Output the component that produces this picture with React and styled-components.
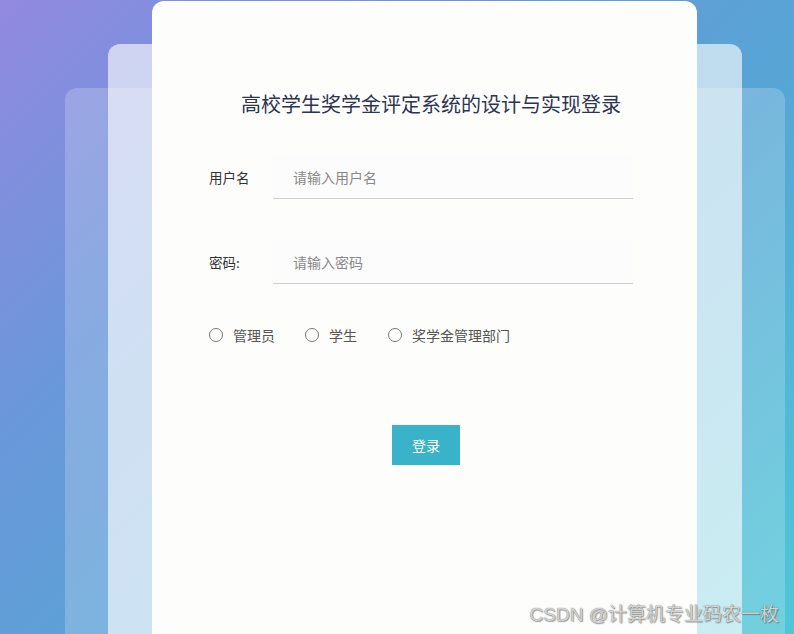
import React from "react";
import styled, { createGlobalStyle } from "styled-components";

const Global = createGlobalStyle`
  html, body { margin: 0; padding: 0; }
  body {
    font-family: "Noto Sans CJK SC", "Microsoft YaHei", "Noto Sans", sans-serif;
    overflow: hidden;
  }
`;

const Page = styled.div`
  position: relative;
  width: 794px;
  height: 634px;
  overflow: hidden;
  background: linear-gradient(135deg, #9389e0 0%, #6a97da 30%, #57a5d5 60%, #4ec7d7 100%);
`;

const Stack = styled.div`
  position: relative;
  width: 545px;
  height: 700px;
  margin-left: 152px;
  padding-top: 1px;
  box-sizing: border-box;

  &::before, &::after {
    content: "";
    position: absolute;
    border-radius: 12px;
  }
  &::before {
    left: -87px;
    right: -88px;
    top: 88px;
    bottom: 0;
    background: rgba(255, 255, 255, 0.2);
  }
  &::after {
    left: -44px;
    right: -45px;
    top: 44px;
    bottom: 0;
    background: rgba(255, 255, 255, 0.62);
  }
`;

const Card = styled.div`
  position: relative;
  z-index: 1;
  height: 100%;
  background: #fdfdfb;
  border-radius: 12px;
  padding: 90px 0 0 57px;
  box-sizing: border-box;
`;

const Title = styled.h1`
  margin: 0 0 38px 32px;
  font-size: 20px;
  font-weight: 400;
  color: #2d3452;
  line-height: 26px;
`;

const Field = styled.div`
  display: flex;
  align-items: center;
  margin-bottom: ${(p) => p.$gap}px;
`;

const Label = styled.label`
  width: 64px;
  font-size: 13.5px;
  color: #333;
`;

const Input = styled.input`
  width: 360px;
  height: 44px;
  box-sizing: border-box;
  border: none;
  border-bottom: 1px solid #cfcfcf;
  background: #fcfcfc;
  padding: 0 20px;
  font-family: inherit;
  font-size: 14px;
  color: #333;
  outline: none;
  &::placeholder { color: #888; }
`;

const Radios = styled.div`
  display: flex;
  align-items: center;
  margin-top: -1px;
  height: 22px;
`;

const RadioItem = styled.label`
  display: flex;
  align-items: center;
  margin-right: ${(p) => p.$mr}px;
  font-size: 14px;
  color: #555;
`;

const RadioCircle = styled.span`
  width: 12px;
  height: 12px;
  border: 1px solid #777;
  border-radius: 50%;
  background: #fff;
  margin-right: 10px;
`;

const ButtonRow = styled.div`
  display: flex;
  padding-left: 183px;
  margin-top: 79px;
`;

const Button = styled.button`
  width: 68px;
  height: 40px;
  border: none;
  background: #38b3c9;
  color: #fff;
  font-family: inherit;
  font-size: 14px;
  cursor: pointer;
`;

const Watermark = styled.div`
  position: absolute;
  right: 15px;
  bottom: 8px;
  z-index: 2;
  font-family: "Liberation Sans", "Noto Sans CJK SC", sans-serif;
  font-size: 19px;
  color: rgba(225, 225, 225, 0.9);
  text-shadow: 0 0 1px rgba(80, 80, 80, 0.9), 1px 1px 1px rgba(80, 80, 80, 0.5);
`;

export default function App() {
  return (
    <>
      <Global />
      <Page>
        <Stack>
          <Card>
            <Title>高校学生奖学金评定系统的设计与实现登录</Title>
            <Field $gap={41}>
              <Label>用户名</Label>
              <Input placeholder="请输入用户名" />
            </Field>
            <Field $gap={41}>
              <Label>密码:</Label>
              <Input type="password" placeholder="请输入密码" />
            </Field>
            <Radios>
              <RadioItem $mr={30}><RadioCircle />管理员</RadioItem>
              <RadioItem $mr={31}><RadioCircle />学生</RadioItem>
              <RadioItem $mr={0}><RadioCircle />奖学金管理部门</RadioItem>
            </Radios>
            <ButtonRow>
              <Button>登录</Button>
            </ButtonRow>
          </Card>
        </Stack>
        <Watermark>CSDN @计算机专业码农一枚</Watermark>
      </Page>
    </>
  );
}
